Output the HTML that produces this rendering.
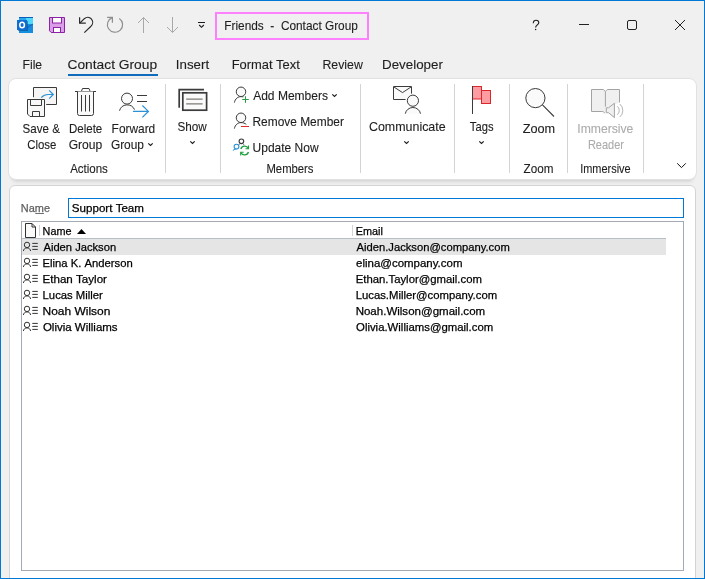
<!DOCTYPE html>
<html><head><meta charset="utf-8"><style>
html,body{margin:0;padding:0;width:705px;height:579px;overflow:hidden;background:#f0f0f0}
svg{display:block}
text{font-family:"Liberation Sans",sans-serif;white-space:pre}
</style></head><body>
<svg width="705" height="579" viewBox="0 0 705 579">
<rect x="0" y="0" width="705" height="579" fill="#f0f0f0"/>
<defs><filter id="sh" x="-5%" y="-20%" width="110%" height="150%"><feDropShadow dx="0" dy="2" stdDeviation="0.8 2" flood-color="#000" flood-opacity="0.16"/></filter></defs>
<rect x="10" y="79" width="685" height="100" rx="7.5" fill="#fff" filter="url(#sh)"/>
<rect x="8.5" y="78.5" width="688" height="101" rx="7.5" fill="#fff" stroke="#e2e2e2" stroke-width="1"/>
<path d="M9.5,579 V191 a5.5,5.5 0 0 1 5.5,-5.5 H690 a5.5,5.5 0 0 1 5.5,5.5 V579" fill="#fff" stroke="#d4d4d4" stroke-width="1"/>
<rect x="0.5" y="0.5" width="704" height="578" fill="none" stroke="#0078d4" stroke-width="1"/>
<rect x="216" y="13" width="152" height="26" fill="none" stroke="#ff80ff" stroke-width="2"/>
<rect x="68" y="74" width="90" height="2" fill="#0f6cbd"/>
<rect x="165" y="84" width="1" height="89" fill="#d4d4d4"/>
<rect x="220" y="84" width="1" height="89" fill="#d4d4d4"/>
<rect x="360" y="84" width="1" height="89" fill="#d4d4d4"/>
<rect x="454" y="84" width="1" height="89" fill="#d4d4d4"/>
<rect x="509" y="84" width="1" height="89" fill="#d4d4d4"/>
<rect x="567" y="84" width="1" height="89" fill="#d4d4d4"/>
<rect x="643" y="84" width="1" height="89" fill="#d4d4d4"/>
<polyline points="148.3,143.3 150.5,145.5 152.7,143.3" fill="none" stroke="#1a1a1a" stroke-width="1.15"/>
<polyline points="190.3,141.3 192.5,143.5 194.7,141.3" fill="none" stroke="#1a1a1a" stroke-width="1.15"/>
<polyline points="332.3,94.3 334.5,96.5 336.7,94.3" fill="none" stroke="#1a1a1a" stroke-width="1.15"/>
<polyline points="404.3,141.3 406.5,143.5 408.7,141.3" fill="none" stroke="#1a1a1a" stroke-width="1.15"/>
<polyline points="479.3,141.3 481.5,143.5 483.7,141.3" fill="none" stroke="#1a1a1a" stroke-width="1.15"/>
<polyline points="677.2,163.3 681.5,167.60000000000002 685.8,163.3" fill="none" stroke="#111" stroke-width="1.0"/>
<g>
<rect x="19" y="17" width="14" height="16" fill="#1490df"/>
<rect x="19" y="17" width="14" height="1.2" fill="#0a5ebd"/>
<rect x="19" y="18" width="7" height="6" fill="#28a8ea"/>
<rect x="26" y="18" width="7" height="6" fill="#50d9ff"/>
<path d="M27,28 L33,24 L33,33 Z" fill="#1a8ae0"/>
<path d="M27.5,27.5 L33,24" stroke="#0a4a8a" stroke-width="0.6"/>
<rect x="18" y="21" width="10" height="10" fill="#0a3f7a" opacity="0.5"/>
<rect x="17" y="20" width="10" height="10" fill="#0f6cd0"/>
<ellipse cx="22.1" cy="25" rx="2.3" ry="2.8" fill="none" stroke="#fff" stroke-width="1.5"/>
</g>
<path d="M49.5,17.5 H64.5 V32.5 H51.2 L49.5,30.8 Z" fill="#db9ee8" stroke="#8e22a6" stroke-width="1"/>
<rect x="52.5" y="17.5" width="9" height="5.5" fill="#fff" stroke="#8e22a6" stroke-width="1"/>
<rect x="53.5" y="27.5" width="7" height="5" fill="#fff" stroke="#8e22a6" stroke-width="1"/>
<path d="M80,23 L84.3,18.7 C86.5,16.8 89.5,16.8 91.3,18.8 C93.3,21 93,24.2 91,26.2 L84.3,32.6" fill="none" stroke="#2b2b2b" stroke-width="1.2"/>
<path d="M79.6,17.2 V23.2 H85.8" fill="none" stroke="#2b2b2b" stroke-width="1.2"/>
<path d="M119.3,18.4 A7.6,7.6 0 1 1 112.2,17.6" fill="none" stroke="#8e8e8e" stroke-width="1.2"/>
<path d="M107.1,17.3 H112.4 V22.7" fill="none" stroke="#8e8e8e" stroke-width="1.2"/>
<path d="M143.5,17.5 V33 M138,23 L143.5,17.5 L149,23" fill="none" stroke="#a8a8a8" stroke-width="1"/>
<path d="M172.5,17 V32.5 M167,27 L172.5,32.5 L178,27" fill="none" stroke="#a8a8a8" stroke-width="1"/>
<rect x="198" y="22" width="7" height="1" fill="#1a1a1a"/>
<polyline points="199.2,25 201.5,27.3 203.8,25" fill="none" stroke="#1a1a1a" stroke-width="1.1"/>
<path d="M533.3,23.2 C533.2,21.2 534.5,20.3 536,20.3 C537.7,20.3 538.8,21.3 538.8,22.7 C538.8,24.6 535.6,25.3 535.6,27.6" fill="none" stroke="#1e1e1e" stroke-width="1.1"/>
<circle cx="535.6" cy="29.5" r="0.75" fill="#1e1e1e"/>
<rect x="579" y="24" width="10" height="1" fill="#222"/>
<rect x="627.5" y="20.5" width="9" height="9" rx="1.5" fill="none" stroke="#222" stroke-width="1"/>
<path d="M675,20 L685,30 M685,20 L675,30" stroke="#222" stroke-width="1"/>
<rect x="34" y="88" width="22" height="16" fill="#f5f5f5"/>
<path d="M33.5,97.2 V87.5 H56.5 V104.5 H46.2" fill="none" stroke="#3b3b3b" stroke-width="1"/>
<path d="M41.2,97.6 C43.5,95.2 45.5,94.5 48,94.5 H53 M49.2,90.4 L53.3,94.5 L49.2,98.6" fill="none" stroke="#2a91d6" stroke-width="1.2"/>
<path d="M27.5,99.5 H44.5 V116.5 H30 L27.5,114 Z" fill="#f7f7f7" stroke="#3b3b3b" stroke-width="1"/>
<path d="M30.5,99.5 V105.5 H41.5 V99.5" fill="none" stroke="#3b3b3b" stroke-width="1"/>
<path d="M32.5,116.5 V111.5 H39.5 V116.5" fill="none" stroke="#3b3b3b" stroke-width="1"/>
<path d="M81.5,91 L82.5,88.5 H89 L90,91" fill="none" stroke="#3b3b3b" stroke-width="1"/>
<path d="M75,91.5 H96" stroke="#3b3b3b" stroke-width="1"/>
<path d="M77.5,91.5 V113.5 a2,2 0 0 0 2,2 H91.5 a2,2 0 0 0 2,-2 V91.5" fill="#fafafa" stroke="#3b3b3b" stroke-width="1"/>
<path d="M81.5,95 V111.5 M85.5,95 V111.5 M89.5,95 V111.5" stroke="#3b3b3b" stroke-width="1"/>
<circle cx="127" cy="98.6" r="5.5" fill="#fafafa" stroke="#3b3b3b" stroke-width="1"/>
<path d="M119.5,110.7 A8,8 0 0 1 134.5,109.6" fill="#fafafa" stroke="#3b3b3b" stroke-width="1"/>
<path d="M137,95.5 H147 M137,101.5 H147" stroke="#3b3b3b" stroke-width="1"/>
<path d="M133,111.4 H148.5 M142.4,105.5 L148.4,111.4 L142.4,117.4" fill="none" stroke="#2a91d6" stroke-width="1.2"/>
<path d="M179.2,107.8 V89.6 H204" fill="none" stroke="#3b3b3b" stroke-width="1.7"/>
<rect x="182.8" y="92.8" width="23.8" height="17.4" fill="#fafafa" stroke="#3b3b3b" stroke-width="1.7"/>
<path d="M186.2,99.1 H202.6 M186.2,103.9 H202.6" stroke="#7d7a75" stroke-width="1.4"/>
<path d="M234.4,102.6 C235,98.8 238,96.6 241,96.6 C241.8,96.6 242.6,96.7 243.4,96.9" fill="none" stroke="#3b3b3b" stroke-width="1"/>
<circle cx="241" cy="91.8" r="4.75" fill="#fafafa" stroke="#3b3b3b" stroke-width="1"/>
<path d="M242.2,99.5 H248.8 M245.5,96.2 V102.8" stroke="#2a9a48" stroke-width="1"/>
<path d="M234.4,128.6 C235,124.8 238,122.6 241,122.6 C243,122.6 245,123.3 246.3,124.4" fill="none" stroke="#3b3b3b" stroke-width="1"/>
<circle cx="241" cy="117.8" r="4.75" fill="#fafafa" stroke="#3b3b3b" stroke-width="1"/>
<path d="M241,126.5 H249" stroke="#e02a2a" stroke-width="1"/>
<circle cx="241.4" cy="141.3" r="2.3" fill="#fafafa" stroke="#3b3b3b" stroke-width="1.1"/>
<path d="M239.3,144.3 L238.6,145 M243.5,144.3 L244.2,145" stroke="#3b3b3b" stroke-width="1"/>
<circle cx="236.5" cy="146.6" r="2.4" fill="#fafafa" stroke="#2a91d6" stroke-width="1.1"/>
<path d="M233,150.5 A4,4 0 0 1 236.5,149" fill="none" stroke="#2a91d6" stroke-width="1.1"/>
<path d="M240.8,149 A4,4 0 0 1 248.3,148.4 M248.4,152 A4,4 0 0 1 240.9,152.6" fill="none" stroke="#1e9e3e" stroke-width="1.3"/>
<path d="M248.5,145.5 V148.8 H245.5 M240.7,155.5 V152.2 H243.7" fill="none" stroke="#1e9e3e" stroke-width="1.1"/>
<rect x="394" y="87" width="17" height="12" fill="#fafafa"/>
<path d="M411.5,93.6 V86.5 H393.5 V99.5 H405.6" fill="none" stroke="#3b3b3b" stroke-width="1"/>
<polyline points="394,87 402.5,92.6 411,87" fill="none" stroke="#3b3b3b" stroke-width="1"/>
<circle cx="412.9" cy="100.7" r="6.8" fill="#fff"/>
<path d="M405.3,113.7 A7.7,7.4 0 0 1 420.5,113.7" fill="#fafafa" stroke="#3b3b3b" stroke-width="1"/>
<circle cx="412.9" cy="100.7" r="5.6" fill="#fafafa" stroke="#3b3b3b" stroke-width="1"/>
<rect x="472.5" y="86.5" width="9" height="12.5" fill="#ff9ca2" stroke="#d8262b" stroke-width="1"/>
<rect x="481.5" y="90.5" width="9" height="13" fill="#ff9ca2" stroke="#d8262b" stroke-width="1"/>
<path d="M472.5,86 V114" stroke="#3b3b3b" stroke-width="1"/>
<circle cx="535.4" cy="98.1" r="9.6" fill="#fafafa" stroke="#3b3b3b" stroke-width="1"/>
<path d="M542.5,104.8 L554,116.5" stroke="#3b3b3b" stroke-width="1.1"/>
<path d="M591.5,89.5 H603.3 L605.4,91.5 L607.3,89.5 H619.5 V102.5 L606,108 V112 L604.8,113.3 L602.2,111.5 H591.5 Z" fill="#f0f0f0" stroke="none"/>
<path d="M619.5,102.5 V89.5 H607.3 L605.4,91.5 L603.3,89.5 H591.5 V111.5 H602.2 C603.5,111.5 604.5,112.3 604.8,113.3" fill="none" stroke="#a3a3a3" stroke-width="1"/>
<path d="M605.4,91.5 V106.7" fill="none" stroke="#a3a3a3" stroke-width="1"/>
<path d="M606.3,107.8 H608.5 L614.4,103.3 V117.6 L608.5,112.7 H606.3 Z" fill="#f0f0f0" stroke="#a3a3a3" stroke-width="1"/>
<path d="M617.2,106.2 A5.5,5.5 0 0 1 617.2,114.8 M619.8,104 A8.5,8.5 0 0 1 619.8,117" fill="none" stroke="#b5b5b5" stroke-width="1"/>
<rect x="68.5" y="198.5" width="615" height="19" fill="#fff" stroke="#0078d7" stroke-width="1"/>
<rect x="35.3" y="213" width="8.6" height="1" fill="#6e6e6e"/>
<rect x="21.5" y="221.5" width="662" height="349" fill="#fff" stroke="#a3aab3" stroke-width="1"/>
<rect x="22" y="238" width="644" height="1" fill="#b8bec6"/>
<rect x="22" y="239" width="644" height="16" fill="#e5e5e5"/>
<path d="M25.5,223.5 H32 L35.5,227 V237.5 H25.5 Z" fill="#fafafa" stroke="#333" stroke-width="1"/>
<path d="M32,223.5 V227 H35.5" fill="none" stroke="#333" stroke-width="1"/>
<rect x="39" y="225" width="1" height="11" fill="#d0d4d8"/>
<rect x="352" y="225" width="1" height="11" fill="#d0d4d8"/>
<polygon points="77,234 81.5,229 86,234" fill="#000"/>
<circle cx="27" cy="244.9" r="2.7" fill="none" stroke="#333" stroke-width="1"/>
<path d="M23.4,251 C23.6,249.2 25,247.9 27,247.9 C29,247.9 30.4,249.2 30.6,251" fill="none" stroke="#333" stroke-width="1"/>
<path d="M32.3,243.4 H37.8 M32.3,246.4 H37.8 M32.3,249.4 H37.8" stroke="#333" stroke-width="1"/>
<circle cx="27" cy="260.9" r="2.7" fill="none" stroke="#333" stroke-width="1"/>
<path d="M23.4,267 C23.6,265.2 25,263.9 27,263.9 C29,263.9 30.4,265.2 30.6,267" fill="none" stroke="#333" stroke-width="1"/>
<path d="M32.3,259.4 H37.8 M32.3,262.4 H37.8 M32.3,265.4 H37.8" stroke="#333" stroke-width="1"/>
<circle cx="27" cy="276.9" r="2.7" fill="none" stroke="#333" stroke-width="1"/>
<path d="M23.4,283 C23.6,281.2 25,279.9 27,279.9 C29,279.9 30.4,281.2 30.6,283" fill="none" stroke="#333" stroke-width="1"/>
<path d="M32.3,275.4 H37.8 M32.3,278.4 H37.8 M32.3,281.4 H37.8" stroke="#333" stroke-width="1"/>
<circle cx="27" cy="292.9" r="2.7" fill="none" stroke="#333" stroke-width="1"/>
<path d="M23.4,299 C23.6,297.2 25,295.9 27,295.9 C29,295.9 30.4,297.2 30.6,299" fill="none" stroke="#333" stroke-width="1"/>
<path d="M32.3,291.4 H37.8 M32.3,294.4 H37.8 M32.3,297.4 H37.8" stroke="#333" stroke-width="1"/>
<circle cx="27" cy="308.9" r="2.7" fill="none" stroke="#333" stroke-width="1"/>
<path d="M23.4,315 C23.6,313.2 25,311.9 27,311.9 C29,311.9 30.4,313.2 30.6,315" fill="none" stroke="#333" stroke-width="1"/>
<path d="M32.3,307.4 H37.8 M32.3,310.4 H37.8 M32.3,313.4 H37.8" stroke="#333" stroke-width="1"/>
<circle cx="27" cy="324.9" r="2.7" fill="none" stroke="#333" stroke-width="1"/>
<path d="M23.4,331 C23.6,329.2 25,327.9 27,327.9 C29,327.9 30.4,329.2 30.6,331" fill="none" stroke="#333" stroke-width="1"/>
<path d="M32.3,323.4 H37.8 M32.3,326.4 H37.8 M32.3,329.4 H37.8" stroke="#333" stroke-width="1"/>
<g style="will-change:transform"><text x="224.32" y="30" font-size="13" fill="#1e1e1e" stroke="#1e1e1e" stroke-width="0.12" font-weight="normal" textLength="133.55" lengthAdjust="spacingAndGlyphs" >Friends&#160;&#160;-&#160;&#160;Contact&#160;Group</text>
<text x="22.49" y="69" font-size="13" fill="#1e1e1e" stroke="#1e1e1e" stroke-width="0.12" font-weight="normal" textLength="19.64" lengthAdjust="spacingAndGlyphs" >File</text>
<text x="67.51" y="69" font-size="13" fill="#1e1e1e" stroke="#1e1e1e" stroke-width="0.12" font-weight="normal" textLength="89.55" lengthAdjust="spacingAndGlyphs" >Contact&#160;Group</text>
<text x="175.87" y="69" font-size="13" fill="#1e1e1e" stroke="#1e1e1e" stroke-width="0.12" font-weight="normal" textLength="33.24" lengthAdjust="spacingAndGlyphs" >Insert</text>
<text x="231.63" y="69" font-size="13" fill="#1e1e1e" stroke="#1e1e1e" stroke-width="0.12" font-weight="normal" textLength="68.18" lengthAdjust="spacingAndGlyphs" >Format&#160;Text</text>
<text x="322.48" y="69" font-size="13" fill="#1e1e1e" stroke="#1e1e1e" stroke-width="0.12" font-weight="normal" textLength="40.37" lengthAdjust="spacingAndGlyphs" >Review</text>
<text x="382.00" y="69" font-size="13" fill="#1e1e1e" stroke="#1e1e1e" stroke-width="0.12" font-weight="normal" textLength="60.91" lengthAdjust="spacingAndGlyphs" >Developer</text>
<text x="22.58" y="133" font-size="13" fill="#1e1e1e" stroke="#1e1e1e" stroke-width="0.12" font-weight="normal" textLength="37.28" lengthAdjust="spacingAndGlyphs" >Save&#160;&amp;</text>
<text x="27.23" y="149" font-size="13" fill="#1e1e1e" stroke="#1e1e1e" stroke-width="0.12" font-weight="normal" textLength="29.18" lengthAdjust="spacingAndGlyphs" >Close</text>
<text x="68.95" y="133" font-size="13" fill="#1e1e1e" stroke="#1e1e1e" stroke-width="0.12" font-weight="normal" textLength="33.35" lengthAdjust="spacingAndGlyphs" >Delete</text>
<text x="68.70" y="149" font-size="13" fill="#1e1e1e" stroke="#1e1e1e" stroke-width="0.12" font-weight="normal" textLength="33.61" lengthAdjust="spacingAndGlyphs" >Group</text>
<text x="111.62" y="133" font-size="13" fill="#1e1e1e" stroke="#1e1e1e" stroke-width="0.12" font-weight="normal" textLength="43.63" lengthAdjust="spacingAndGlyphs" >Forward</text>
<text x="110.90" y="149" font-size="13" fill="#1e1e1e" stroke="#1e1e1e" stroke-width="0.12" font-weight="normal" textLength="33.09" lengthAdjust="spacingAndGlyphs" >Group</text>
<text x="70.17" y="173" font-size="13" fill="#1e1e1e" stroke="#1e1e1e" stroke-width="0.12" font-weight="normal" textLength="37.72" lengthAdjust="spacingAndGlyphs" >Actions</text>
<text x="177.47" y="131" font-size="13" fill="#1e1e1e" stroke="#1e1e1e" stroke-width="0.12" font-weight="normal" textLength="29.29" lengthAdjust="spacingAndGlyphs" >Show</text>
<text x="253.17" y="100" font-size="13" fill="#1e1e1e" stroke="#1e1e1e" stroke-width="0.12" font-weight="normal" textLength="74.85" lengthAdjust="spacingAndGlyphs" >Add&#160;Members</text>
<text x="252.52" y="126" font-size="13" fill="#1e1e1e" stroke="#1e1e1e" stroke-width="0.12" font-weight="normal" textLength="91.38" lengthAdjust="spacingAndGlyphs" >Remove&#160;Member</text>
<text x="252.57" y="151.5" font-size="13" fill="#1e1e1e" stroke="#1e1e1e" stroke-width="0.12" font-weight="normal" textLength="66.01" lengthAdjust="spacingAndGlyphs" >Update&#160;Now</text>
<text x="266.47" y="173" font-size="13" fill="#1e1e1e" stroke="#1e1e1e" stroke-width="0.12" font-weight="normal" textLength="47.03" lengthAdjust="spacingAndGlyphs" >Members</text>
<text x="368.98" y="131" font-size="13" fill="#1e1e1e" stroke="#1e1e1e" stroke-width="0.12" font-weight="normal" textLength="76.67" lengthAdjust="spacingAndGlyphs" >Communicate</text>
<text x="469.85" y="131" font-size="13" fill="#1e1e1e" stroke="#1e1e1e" stroke-width="0.12" font-weight="normal" textLength="23.64" lengthAdjust="spacingAndGlyphs" >Tags</text>
<text x="522.69" y="133" font-size="13" fill="#1e1e1e" stroke="#1e1e1e" stroke-width="0.12" font-weight="normal" textLength="32.45" lengthAdjust="spacingAndGlyphs" >Zoom</text>
<text x="523.52" y="173" font-size="13" fill="#1e1e1e" stroke="#1e1e1e" stroke-width="0.12" font-weight="normal" textLength="29.85" lengthAdjust="spacingAndGlyphs" >Zoom</text>
<text x="577.28" y="133" font-size="13" fill="#acacac" stroke="#acacac" stroke-width="0.12" font-weight="normal" textLength="56.06" lengthAdjust="spacingAndGlyphs" >Immersive</text>
<text x="587.89" y="148.5" font-size="13" fill="#acacac" stroke="#acacac" stroke-width="0.12" font-weight="normal" textLength="36.07" lengthAdjust="spacingAndGlyphs" >Reader</text>
<text x="580.19" y="173" font-size="13" fill="#1e1e1e" stroke="#1e1e1e" stroke-width="0.12" font-weight="normal" textLength="50.49" lengthAdjust="spacingAndGlyphs" >Immersive</text>
<text x="20.80" y="212" font-size="11.5" fill="#606060" stroke="#606060" stroke-width="0.25" font-weight="normal" textLength="29.17" lengthAdjust="spacingAndGlyphs" >Name</text>
<text x="71.88" y="212" font-size="11.5" fill="#000" stroke="#000" stroke-width="0.25" font-weight="normal" textLength="72.08" lengthAdjust="spacingAndGlyphs" >Support&#160;Team</text>
<text x="42.61" y="235" font-size="11.5" fill="#000" stroke="#000" stroke-width="0.25" font-weight="normal" textLength="28.85" lengthAdjust="spacingAndGlyphs" >Name</text>
<text x="355.70" y="235" font-size="11.5" fill="#000" stroke="#000" stroke-width="0.25" font-weight="normal" textLength="27.13" lengthAdjust="spacingAndGlyphs" >Email</text>
<text x="43.47" y="251" font-size="11.5" fill="#000" stroke="#000" stroke-width="0.25" font-weight="normal" textLength="72.67" lengthAdjust="spacingAndGlyphs" >Aiden&#160;Jackson</text>
<text x="356.57" y="251" font-size="11.5" fill="#000" stroke="#000" stroke-width="0.25" font-weight="normal" textLength="153.15" lengthAdjust="spacingAndGlyphs" >Aiden.Jackson@company.com</text>
<text x="42.56" y="267" font-size="11.5" fill="#000" stroke="#000" stroke-width="0.25" font-weight="normal" textLength="90.17" lengthAdjust="spacingAndGlyphs" >Elina&#160;K.&#160;Anderson</text>
<text x="356.11" y="267" font-size="11.5" fill="#000" stroke="#000" stroke-width="0.25" font-weight="normal" textLength="106.34" lengthAdjust="spacingAndGlyphs" >elina@company.com</text>
<text x="42.54" y="283" font-size="11.5" fill="#000" stroke="#000" stroke-width="0.25" font-weight="normal" textLength="64.44" lengthAdjust="spacingAndGlyphs" >Ethan&#160;Taylor</text>
<text x="355.66" y="283" font-size="11.5" fill="#000" stroke="#000" stroke-width="0.25" font-weight="normal" textLength="126.28" lengthAdjust="spacingAndGlyphs" >Ethan.Taylor@gmail.com</text>
<text x="42.57" y="299" font-size="11.5" fill="#000" stroke="#000" stroke-width="0.25" font-weight="normal" textLength="60.30" lengthAdjust="spacingAndGlyphs" >Lucas&#160;Miller</text>
<text x="355.67" y="299" font-size="11.5" fill="#000" stroke="#000" stroke-width="0.25" font-weight="normal" textLength="141.48" lengthAdjust="spacingAndGlyphs" >Lucas.Miller@company.com</text>
<text x="42.51" y="315" font-size="11.5" fill="#000" stroke="#000" stroke-width="0.25" font-weight="normal" textLength="67.89" lengthAdjust="spacingAndGlyphs" >Noah&#160;Wilson</text>
<text x="355.65" y="315" font-size="11.5" fill="#000" stroke="#000" stroke-width="0.25" font-weight="normal" textLength="129.51" lengthAdjust="spacingAndGlyphs" >Noah.Wilson@gmail.com</text>
<text x="42.95" y="331" font-size="11.5" fill="#000" stroke="#000" stroke-width="0.25" font-weight="normal" textLength="74.65" lengthAdjust="spacingAndGlyphs" >Olivia&#160;Williams</text>
<text x="356.06" y="331" font-size="11.5" fill="#000" stroke="#000" stroke-width="0.25" font-weight="normal" textLength="137.17" lengthAdjust="spacingAndGlyphs" >Olivia.Williams@gmail.com</text></g>
</svg>
</body></html>
